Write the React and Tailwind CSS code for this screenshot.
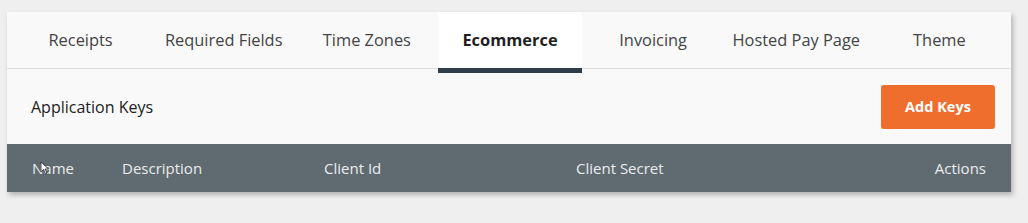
import React from "react";

const tabs = ["Receipts", "Required Fields", "Time Zones", "Ecommerce", "Invoicing", "Hosted Pay Page", "Theme"];

export default function App() {
  const active = "Ecommerce";
  return (
    <div className="h-[223px] w-full bg-[#efefef] pt-3 pl-[7px] pr-[17px]" style={{ fontFamily: '"Open Sans", sans-serif' }}>
      <div className="bg-[#f9f9f9] shadow-[2px_3px_5px_rgba(0,0,0,0.25)]">
        <div className="flex h-[57px] border-b border-[#dedede] pl-[2px]">
          {tabs.map((t) => (
            <div
              key={t}
              className={`relative flex flex-1 items-center justify-center pt-[1px] text-[16.4px] ${t === active ? "bg-white font-bold text-[#1f1f1f]" : "text-[#444]"}`}
            >
              {t}
              {t === active && <div className="absolute left-0 right-0 -bottom-[5px] h-[5px] bg-[#2f3e48]" />}
            </div>
          ))}
        </div>
        <div className="flex h-[75px] items-center justify-between pl-6 pr-4">
          <span className="text-[16px] text-[#222]">Application Keys</span>
          <button className="h-[44px] w-[114px] rounded-[3px] bg-[#ef6e2e] text-[14.5px] font-bold text-white">Add Keys</button>
        </div>
        <div className="relative flex h-[48px] items-center bg-[#5f6a71] pl-[25px] pr-[25px] text-[15px] text-[#ececec]">
          <div className="w-[90px]">Name</div>
          <div className="w-[202px]">Description</div>
          <div className="w-[252px]">Client Id</div>
          <div className="flex-1">Client Secret</div>
          <div>Actions</div>
          <svg className="absolute left-[33px] top-[17px]" width="10" height="14" viewBox="0 0 10 14">
            <path d="M1 1 L1 11 L3.5 8.5 L5.5 13 L7 12.3 L5 8 L8.5 8 Z" fill="#fff" stroke="#222" strokeWidth="0.8" />
          </svg>
        </div>
      </div>
    </div>
  );
}
